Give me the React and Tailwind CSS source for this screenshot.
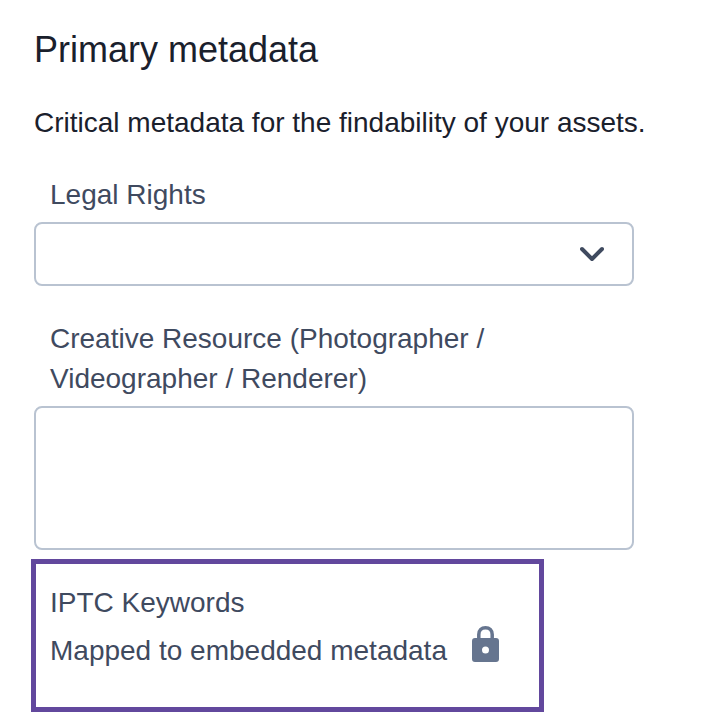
export default function App() {
  return (
    <div className="w-[710px] h-[726px] bg-white overflow-hidden pl-[34px] pt-[30px] font-['Liberation_Sans',Arial,sans-serif]">
      <h2 className="text-[36px] leading-[40px] text-[#1a202c]">Primary metadata</h2>
      <p className="mt-[37px] text-[28px] leading-[32px] text-[#1a202c] whitespace-nowrap">Critical metadata for the findability of your assets.</p>
      <label className="block mt-[36px] ml-[16px] text-[28px] leading-[40px] text-[#3f4a5f]">Legal Rights</label>
      <div className="mt-[7px] w-[600px] h-[64px] border-2 border-[#b9c3d1] rounded-[8px] flex items-center justify-end pr-[28px]">
        <svg width="24" height="16" viewBox="0 0 24 16" fill="none" stroke="#3f4a5f" strokeWidth="4" strokeLinecap="round" strokeLinejoin="round">
          <path d="M2 3l10 10L22 3" />
        </svg>
      </div>
      <label className="block mt-[33px] ml-[16px] w-[520px] text-[28px] leading-[40px] text-[#3f4a5f]">Creative Resource (Photographer / Videographer / Renderer)</label>
      <div className="mt-[7px] w-[600px] h-[144px] border-2 border-[#b9c3d1] rounded-[8px]" />
      <div className="mt-[9px] -ml-[3px] w-[513px] h-[153px] border-[5px] border-[#62489d] pl-[14px] pt-[19px]">
        <div className="text-[28px] leading-[40px] text-[#3f4a5f]">IPTC Keywords</div>
        <div className="mt-[8px] flex items-start text-[28px] leading-[40px] text-[#3f4a5f]">
          <span>Mapped to embedded metadata</span>
          <svg className="ml-[25px] -mt-[5px]" width="27" height="36" viewBox="0 0 27 36">
            <path fill="none" stroke="#66758f" strokeWidth="3.5" d="M6.800 14V8.500C6.800 4.300 9.500 1.750 13.500 1.750S20.200 4.300 20.200 8.500V14" />
            <path fill="#66758f" fillRule="evenodd" d="M3 12h21a3 3 0 0 1 3 3v18a3 3 0 0 1-3 3H3a3 3 0 0 1-3-3V15a3 3 0 0 1 3-3zm10.500 8.500a3.500 3.500 0 1 0 0 7 3.500 3.500 0 0 0 0-7z" />
          </svg>
        </div>
      </div>
    </div>
  );
}
